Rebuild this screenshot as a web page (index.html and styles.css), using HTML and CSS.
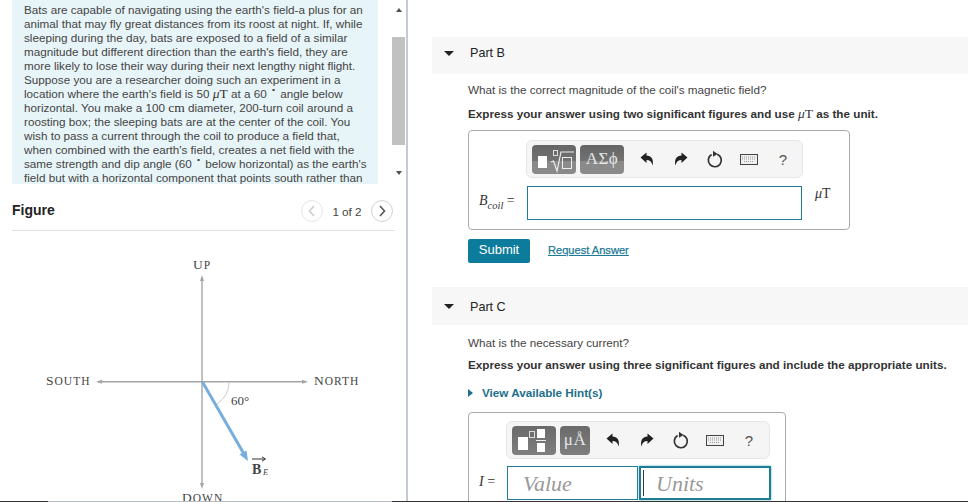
FILE: index.html
```html
<!DOCTYPE html>
<html lang="en">
<head>
<meta charset="utf-8">
<title>Part B and Part C</title>
<link rel="stylesheet" href="styles.css">
</head>
<body>
<svg class="defs" width="0" height="0" aria-hidden="true">
  <symbol id="undo" viewBox="0 0 14 14"><path d="M0.5 5.5 L6.5 0.5 V3.5 C11 3.5 14 7 12.6 13.5 C11.6 9.8 9.8 8 6.5 8 V11 Z"/></symbol>
  <symbol id="redo" viewBox="0 0 14 14"><path d="M13.5 5.5 L7.5 0.5 V3.5 C3 3.5 0 7 1.4 13.5 C2.4 9.8 4.2 8 7.5 8 V11 Z"/></symbol>
  <symbol id="refresh" viewBox="0 0 16 18"><path d="M4.6 4.6 A6.5 6.5 0 1 0 10.2 4.2" fill="none" stroke="#333" stroke-width="1.7"/><path d="M6 0.8 L10.6 3.9 L6 6.8 Z" fill="#333"/></symbol>
  <symbol id="keys" viewBox="0 0 18 11"><rect x="0.5" y="0.5" width="17" height="10" fill="#f0f0f0" stroke="#444"/><path d="M2 3 H16 M2 5 H16 M4 7.5 H14" stroke="#999" stroke-width="1" stroke-dasharray="1 1"/></symbol>
</svg>
<div class="app">
  <section class="left">
    <div class="top">
      <div class="problem">
        Bats are capable of navigating using the earth's field-a plus for an<br>
        animal that may fly great distances from its roost at night. If, while<br>
        sleeping during the day, bats are exposed to a field of a similar<br>
        magnitude but different direction than the earth's field, they are<br>
        more likely to lose their way during their next lengthy night flight.<br>
        Suppose you are a researcher doing such an experiment in a<br>
        location where the earth's field is 50 <span class="math"><i>μ</i>T</span> at a 60 <span class="deg">∘</span> angle below<br>
        horizontal. You make a 100 <span class="math">cm</span> diameter, 200-turn coil around a<br>
        roosting box; the sleeping bats are at the center of the coil. You<br>
        wish to pass a current through the coil to produce a field that,<br>
        when combined with the earth's field, creates a net field with the<br>
        same strength and dip angle (60 <span class="deg">∘</span> below horizontal) as the earth's<br>
        field but with a horizontal component that points south rather than
      </div>
      <div class="scrollbar">
        <span class="sb-up"></span>
        <span class="sb-thumb"></span>
        <span class="sb-down"></span>
      </div>
    </div>
    <div class="figure-head">
      <h2 class="figure-title">Figure</h2>
      <div class="pager">
        <span class="circle circle-off"><svg width="10" height="12" viewBox="0 0 10 12"><path d="M7 1 L2.5 6 L7 11" fill="none" stroke="#ccc" stroke-width="1.6"/></svg></span>
        <span class="pager-text">1 of 2</span>
        <span class="circle"><svg width="10" height="12" viewBox="0 0 10 12"><path d="M3 1 L7.5 6 L3 11" fill="none" stroke="#555" stroke-width="1.6"/></svg></span>
      </div>
    </div>
    <svg class="figure" width="406" height="271" viewBox="0 230 406 271">
      <g stroke="#a3a5a8" stroke-width="1.4" fill="none">
        <path d="M202 277 V485"/>
        <path d="M98 380.7 H306"/>
      </g>
      <g fill="#a3a5a8">
        <path d="M202 274 L204 280 H200 Z"/>
        <path d="M202 488 L204 482 H200 Z"/>
        <path d="M96 380.7 L102 378.7 V382.7 Z"/>
        <path d="M308 380.7 L302 378.7 V382.7 Z"/>
      </g>
      <path d="M229 381 A27 27 0 0 1 217 403" fill="none" stroke="#ccc" stroke-width="1"/>
      <path d="M202.5 381 L244 453" stroke="#77aedd" stroke-width="3" fill="none"/>
      <path d="M248 460 L239.5 453.5 L246.5 449.5 Z" fill="#77aedd"/>
      <g class="fig-text">
        <text x="193" y="268">U<tspan class="sc">P</tspan></text>
        <text x="46" y="384">S<tspan class="sc">OUTH</tspan></text>
        <text x="314" y="384">N<tspan class="sc">ORTH</tspan></text>
        <text x="182" y="501">D<tspan class="sc">OWN</tspan></text>
        <text x="231" y="404" class="angle">60°</text>
        <text x="252" y="473" class="be">B</text>
        <text x="263" y="474" class="be-sub">E</text>
      </g>
      <path d="M252 458 H265 M262 455.8 L265.5 458 L262 460.2" fill="none" stroke="#333" stroke-width="1"/>
    </svg>
  </section>
  <main class="right">
    <div class="part-head part-head-b"><span class="caret"></span><h2 class="part-title">Part B</h2></div>
    <div class="part-body">
      <p class="question">What is the correct magnitude of the coil's magnetic field?</p>
      <p class="instruction">Express your answer using two significant figures and use <span class="math"><i>μ</i>T</span> as the unit.</p>
      <div class="answer answer-b">
        <div class="toolbar">
          <span class="tool tool-wide">
            <svg width="44" height="29" viewBox="0 0 44 29"><rect x="6" y="11" width="9" height="12" fill="#fff"/><rect x="21.5" y="5.5" width="4" height="5" fill="none" stroke="#ddd"/><path d="M19 17 L21.5 16 L25 26 L29 7 H42" fill="none" stroke="#eee" stroke-width="1.2"/><rect x="30.5" y="12.5" width="9" height="11" fill="none" stroke="#eee"/></svg>
          </span>
          <span class="tool tool-wide tool-text">ΑΣϕ</span>
          <span class="cell first-cell"><svg class="ic" width="14" height="14"><use href="#undo"/></svg></span>
          <span class="cell"><svg class="ic" width="14" height="14"><use href="#redo"/></svg></span>
          <span class="cell"><svg width="16" height="18"><use href="#refresh"/></svg></span>
          <span class="cell"><svg width="18" height="11"><use href="#keys"/></svg></span>
          <span class="cell help">?</span>
        </div>
        <div class="entry">
          <span class="label label-b"><i>B<sub>coil</sub></i> =</span>
          <span class="field"></span>
          <span class="unit math"><i>μ</i>T</span>
        </div>
      </div>
      <div class="actions">
        <button class="submit" type="button">Submit</button>
        <a class="request" href="#">Request Answer</a>
      </div>
    </div>
    <div class="part-head part-head-c"><span class="caret"></span><h2 class="part-title">Part C</h2></div>
    <div class="part-body">
      <p class="question question-c">What is the necessary current?</p>
      <p class="instruction instruction-c">Express your answer using three significant figures and include the appropriate units.</p>
      <a class="hint" href="#"><span class="hint-caret"></span>View Available Hint(s)</a>
      <div class="answer answer-c">
        <div class="toolbar toolbar-c">
          <span class="tool tool-wide tool-soft">
            <svg width="44" height="29" viewBox="0 0 44 29"><rect x="6" y="11" width="10" height="13" fill="#fff"/><rect x="17.5" y="5.5" width="5" height="6" fill="none" stroke="#ddd"/><rect x="25" y="3" width="8" height="9" fill="#fff"/><path d="M24 14.5 H34" stroke="#eee"/><rect x="25" y="17" width="8" height="9" fill="#fff"/></svg>
          </span>
          <span class="tool tool-narrow tool-text tool-soft">μÅ</span>
          <span class="cell first-cell"><svg class="ic" width="14" height="14"><use href="#undo"/></svg></span>
          <span class="cell"><svg class="ic" width="14" height="14"><use href="#redo"/></svg></span>
          <span class="cell"><svg width="16" height="18"><use href="#refresh"/></svg></span>
          <span class="cell"><svg width="18" height="11"><use href="#keys"/></svg></span>
          <span class="cell help">?</span>
        </div>
        <div class="entry entry-c">
          <span class="label label-c"><i>I</i> =</span>
          <span class="field field-value">Value</span>
          <span class="field field-units"><span class="text-cursor"></span>Units</span>
        </div>
      </div>
    </div>
  </main>
</div>
<div class="bottom-line"><span class="seg-dark seg-a"></span><span class="seg-light"></span><span class="seg-dark seg-b"></span></div>
</body>
</html>
```
FILE: styles.css
```css
* { box-sizing: border-box; }
html, body { margin: 0; padding: 0; }
body {
  width: 968px;
  height: 502px;
  overflow: hidden;
  background: #fff;
  font-family: "Liberation Sans", Arial, sans-serif;
  font-size: 11.7px;
  color: #333;
}
.defs { position: absolute; }
.app { display: flex; height: 501px; overflow: hidden; }
.bottom-line { display: flex; height: 1px; }
.seg-dark { background: #333; }
.seg-a { width: 48px; }
.seg-b { flex: 1; }
.seg-light { width: 344px; background: #b8bcc0; }

/* left pane */
.left {
  width: 408px;
  flex: none;
  border-right: 2px solid #c3cad2;
  display: flex;
  flex-direction: column;
  overflow: hidden;
}
.top { display: flex; height: 184px; flex: none; }
.problem {
  width: 366px;
  margin-left: 12px;
  padding: 3px 0 0 12px;
  background: #e8f5f8;
  line-height: 14px;
  color: #444;
  overflow: hidden;
  white-space: nowrap;
  flex: none;
}
.math { font-family: "Liberation Serif", serif; font-size: 13.5px; line-height: 0; color: #333; }
.deg { font-size: 8px; line-height: 0; position: relative; top: -5px; padding: 0 1px; }
.scrollbar {
  width: 15px;
  margin-left: 13px;
  flex: none;
  display: flex;
  flex-direction: column;
  align-items: center;
  position: relative;
}
.sb-up {
  margin-top: 8px;
  border-left: 3.5px solid transparent;
  border-right: 3.5px solid transparent;
  border-bottom: 4px solid #505050;
}
.sb-thumb { width: 13px; height: 108px; margin-top: 25px; background: #c1c1c1; }
.sb-down {
  margin-top: 26px;
  border-left: 3.5px solid transparent;
  border-right: 3.5px solid transparent;
  border-top: 4px solid #505050;
}
.figure-head {
  height: 47px;
  flex: none;
  margin: 0 11px 0 12px;
  border-bottom: 1px solid #e0e2e4;
  display: flex;
  justify-content: space-between;
  align-items: flex-start;
  padding-top: 16px;
}
.figure-title { margin: 0; font-size: 14px; line-height: 20px; font-weight: 700; color: #222; }
.pager { display: flex; align-items: center; margin: 0 2px 0 0; }
.pager-text { width: 48px; text-align: center; font-size: 11.7px; color: #444; }
.circle {
  width: 22px;
  height: 22px;
  border: 1px solid #cfd3d6;
  border-radius: 50%;
  display: flex;
  align-items: center;
  justify-content: center;
}
.circle-off { border-color: #e6e6e6; }
.figure { display: block; flex: none; }
.fig-text { font-family: "Liberation Serif", serif; font-size: 13.5px; fill: #444; letter-spacing: 1px; }
.sc { font-size: 11.5px; }
.angle { font-size: 13px; letter-spacing: 0; }
.be { font-weight: 700; font-size: 14px; }
.be-sub { font-style: italic; font-size: 8.5px; }

/* right pane */
.right { flex: 1; padding: 37px 0 0 24px; overflow: hidden; }
.part-head {
  height: 37px;
  background: #f7f7f7;
  display: flex;
  align-items: center;
  padding-left: 12px;
}
.part-head-b { padding-bottom: 5px; }
.part-head-c { height: 38px; margin-top: 24px; padding-top: 1px; }
.caret {
  border-left: 5px solid transparent;
  border-right: 5px solid transparent;
  border-top: 5px solid #222;
}
.part-title { margin: 0 0 0 16px; font-size: 12.6px; font-weight: 400; color: #222; }
.part-body { padding-left: 36px; }
.question { margin: 8px 0 0; line-height: 16px; color: #444; }
.instruction { margin: 8px 0 0; line-height: 16px; font-weight: 700; color: #333; white-space: nowrap; }
.instruction .math { font-weight: 400; }
.question-c { margin-top: 10px; }
.instruction-c { margin-top: 6px; }
.answer { border: 1px solid #aaa; border-radius: 4px; }
.answer-b { width: 382px; height: 100px; margin-top: 8px; padding: 9px 0 0 57px; }
.answer-c { width: 318px; height: 100px; margin-top: 11px; padding: 8px 0 0 37px; }
.toolbar {
  width: 277px;
  height: 38px;
  background: #f5f5f5;
  border: 1px solid #e6e6e6;
  border-radius: 6px;
  display: flex;
  align-items: center;
  padding-left: 5px;
}
.toolbar-c { width: 264px; }
.tool {
  height: 29px;
  border-radius: 4px;
  background: linear-gradient(#666 0, #727272 55%, #8a8a8a 56%, #8a8a8a 100%);
  display: flex;
  align-items: center;
  justify-content: center;
  margin-right: 4px;
  flex: none;
}
.tool-soft { background: linear-gradient(#6a6a6a, #7f7f7f); }
.tool-wide { width: 44px; }
.tool-narrow { width: 30px; }
.tool-text { font-family: "Liberation Serif", serif; font-size: 17px; color: #e6e6e6; letter-spacing: 0.5px; }
.cell { width: 34px; display: flex; justify-content: center; align-items: center; flex: none; }
.first-cell { margin-left: 2px; }
.ic { fill: #222; }
.help { font-size: 15px; color: #555; }
.entry { display: flex; margin: 8px 0 0 -58px; }
.label { width: 59px; flex: none; font-family: "Liberation Serif", serif; font-size: 14px; color: #333; padding: 7px 0 0 11px; white-space: nowrap; }
.label sub { font-size: 10.5px; line-height: 0; }
.field { display: block; height: 34px; width: 275px; border: 1.5px solid #1c7d93; background: #fff; flex: none; }
.unit { margin-left: 13px; font-size: 14px; line-height: 16px; }
.entry-c { margin: 7px 0 0 -38px; }
.label-c { width: 39px; padding-top: 8px; }
.field-value, .field-units {
  font-family: "Liberation Serif", serif;
  font-style: italic;
  font-size: 22px;
  color: #999;
  line-height: 33px;
  padding-left: 15px;
}
.field-value { width: 131px; }
.field-units {
  width: 132px;
  margin-left: 1px;
  position: relative;
  border: 2px solid #1c7d93;
  box-shadow: 0 0 2px #5fb6cc;
  line-height: 31px;
}
.text-cursor { position: absolute; left: 2px; top: 2px; width: 1px; height: 26px; background: #335; }
.actions { display: flex; align-items: center; margin-top: 9px; height: 24px; }
.submit {
  width: 62px;
  height: 24px;
  border: 0;
  padding: 0 0 3px;
  border-radius: 2px;
  background: #0d7c9c;
  color: #fff;
  font-family: "Liberation Sans", Arial, sans-serif;
  font-size: 13px;
}
.request { margin: 0 0 2px 18px; color: #1d7a96; font-size: 11.1px; -webkit-text-stroke: 0.25px #1d7a96; }
.hint {
  display: block;
  margin-top: 12px;
  line-height: 16px;
  color: #1d6f8c;
  font-weight: 700;
  text-decoration: none;
  white-space: nowrap;
}
.hint-caret {
  display: inline-block;
  border-top: 4px solid transparent;
  border-bottom: 4px solid transparent;
  border-left: 5px solid #1d6f8c;
  margin: 0 9px 0 0;
}
```
